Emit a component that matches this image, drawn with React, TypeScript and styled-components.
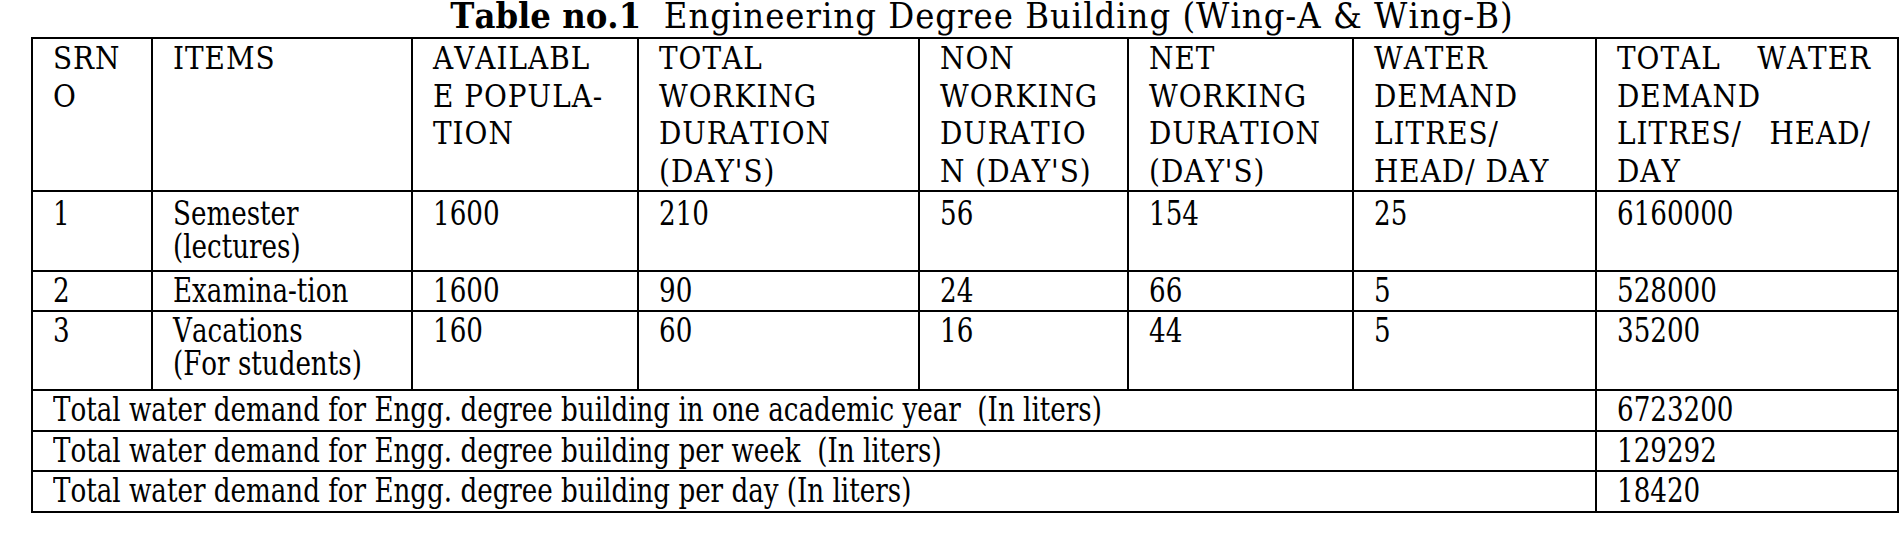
import React from 'react';
import styled, { createGlobalStyle } from 'styled-components';

const GlobalStyle = createGlobalStyle`
  body {
    margin: 0;
    background: #FFFFFF;
    color: #000000;
    font-family: 'DejaVu Serif', 'Liberation Serif', serif;
    font-stretch: condensed;
    font-kerning: none;
  }
`;

const Page = styled.div`
  padding-left: 31px;
  width: 1866px;
`;

const Title = styled.h1`
  margin: 0;
  height: 37px;
  padding-left: 36px;
  font-size: 36px;
  line-height: 30px;
  font-weight: 400;
  letter-spacing: 1px;
  text-align: center;
  white-space: nowrap;
  overflow: visible;

  b {
    font-weight: 700;
    letter-spacing: 0;
  }
`;

const Table = styled.table`
  width: 1866px;
  table-layout: fixed;
  border-collapse: collapse;
  border: 2px solid #000000;
`;

const Row = styled.tr<{ $h: number }>`
  height: ${(p) => p.$h}px;
`;

const HeadCell = styled.td<{ $justify?: boolean }>`
  border: 2px solid #000000;
  padding: 1px 26px 0 20px;
  vertical-align: top;
  font-size: 31px;
  line-height: 37.6px;
  letter-spacing: 1px;
  white-space: nowrap;
  text-align: left;
  text-align-last: ${(p) => (p.$justify ? 'justify' : 'auto')};
`;

const Cell = styled.td<{ $top?: number }>`
  border: 2px solid #000000;
  padding: ${(p) => p.$top ?? 2}px 8px 0 20px;
  vertical-align: top;
  white-space: nowrap;
  overflow: visible;
`;

const Txt = styled.span`
  display: inline-block;
  font-size: 34px;
  line-height: 33px;
  transform: scaleX(0.855);
  transform-origin: 0 0;
`;

const widths = [120, 260, 226, 281, 209, 225, 243, 302];

const rows = [
  { h: 80, top: 5, cells: ['1', 'Semester\n(lectures)', '1600', '210', '56', '154', '25', '6160000'] },
  { h: 40, top: 2, cells: ['2', 'Examina-tion', '1600', '90', '24', '66', '5', '528000'] },
  { h: 79, top: 2, cells: ['3', 'Vacations\n(For students)', '160', '60', '16', '44', '5', '35200'] },
];

const totals = [
  { h: 41, label: 'Total water demand for Engg. degree building in one academic year\u00a0 (In liters)', value: '6723200' },
  { h: 40, label: 'Total water demand for Engg. degree building per week\u00a0 (In liters)', value: '129292' },
  { h: 41, label: 'Total water demand for Engg. degree building per day (In liters)', value: '18420' },
];

const Lines: React.FC<{ text: string }> = ({ text }) => (
  <>
    {text.split('\n').map((line, i) => (
      <React.Fragment key={i}>
        {i > 0 && <br />}
        {line}
      </React.Fragment>
    ))}
  </>
);

const App: React.FC = () => {
  return (
    <Page>
      <GlobalStyle />
      <Title>
        <b>Table no.1</b>&nbsp; Engineering Degree Building (Wing-A &amp; Wing-B)
      </Title>
      <Table>
        <colgroup>
          {widths.map((w, i) => (
            <col key={i} style={{ width: w }} />
          ))}
        </colgroup>
        <tbody>
          <Row $h={153}>
            <HeadCell><Lines text={'SRN\nO'} /></HeadCell>
            <HeadCell>ITEMS</HeadCell>
            <HeadCell><Lines text={'AVAILABL\nE POPULA-\nTION'} /></HeadCell>
            <HeadCell><Lines text={"TOTAL\nWORKING\nDURATION\n(DAY'S)"} /></HeadCell>
            <HeadCell><Lines text={"NON\nWORKING\nDURATIO\nN (DAY'S)"} /></HeadCell>
            <HeadCell><Lines text={"NET\nWORKING\nDURATION\n(DAY'S)"} /></HeadCell>
            <HeadCell><Lines text={'WATER\nDEMAND\nLITRES/\nHEAD/ DAY'} /></HeadCell>
            <HeadCell $justify><Lines text={'TOTAL WATER\nDEMAND\nLITRES/ HEAD/\nDAY'} /></HeadCell>
          </Row>
          {rows.map((r, i) => (
            <Row key={i} $h={r.h}>
              {r.cells.map((c, j) => (
                <Cell key={j} $top={r.top}>
                  <Txt><Lines text={c} /></Txt>
                </Cell>
              ))}
            </Row>
          ))}
          {totals.map((t, i) => (
            <Row key={i} $h={t.h}>
              <Cell colSpan={7}>
                <Txt>{t.label}</Txt>
              </Cell>
              <Cell>
                <Txt>{t.value}</Txt>
              </Cell>
            </Row>
          ))}
        </tbody>
      </Table>
    </Page>
  );
};

export default App;
